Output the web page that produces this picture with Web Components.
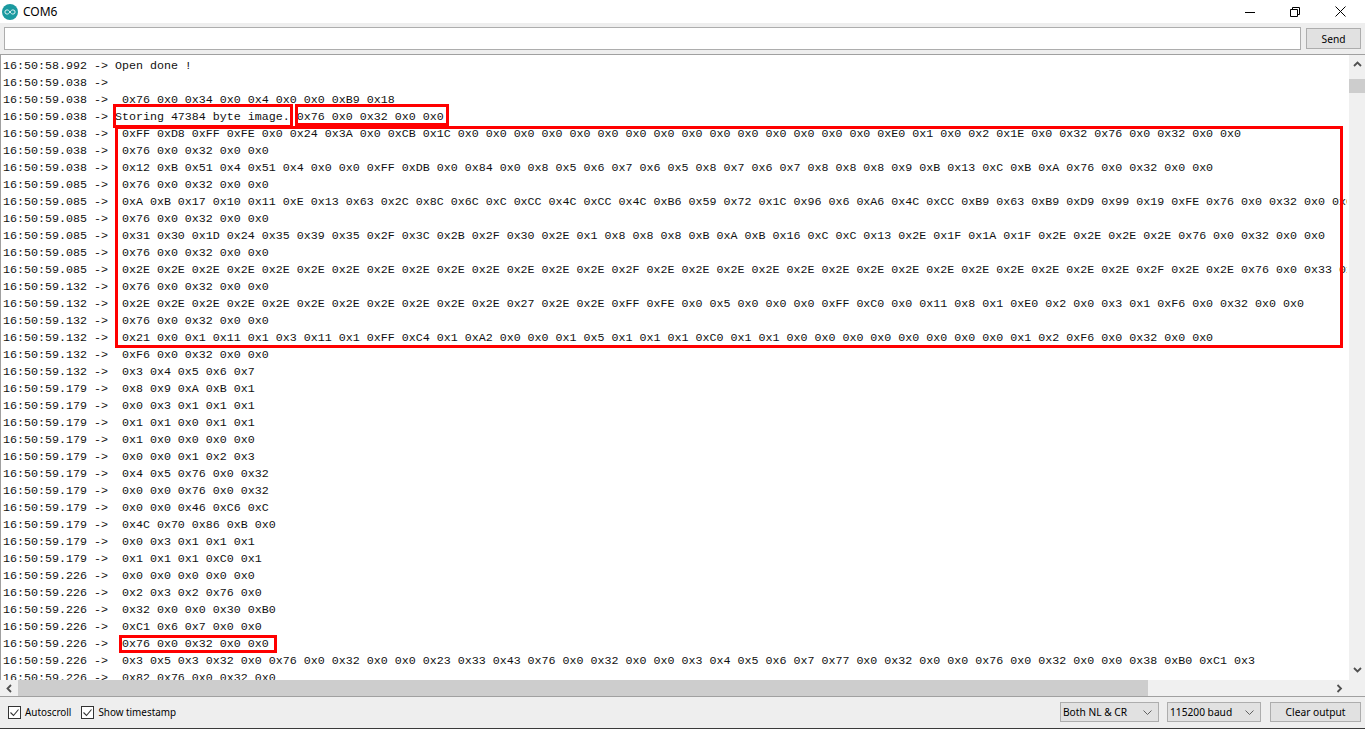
<!DOCTYPE html>
<html>
<head>
<meta charset="utf-8">
<title>COM6</title>
<style>
  html, body { margin: 0; padding: 0; height: 100%; overflow: hidden; background: #eee; }
</style>
</head>
<body>
<serial-monitor>
  <title-bar slot="title">COM6</title-bar>
  <send-row slot="send"></send-row>
  <serial-output slot="output"></serial-output>
  <footer-bar slot="footer"></footer-bar>
</serial-monitor>

<script>
const UI_FONT = '"Noto Sans", "Open Sans", sans-serif';

class SerialMonitor extends HTMLElement {
  constructor() {
    super();
    this.attachShadow({ mode: 'open' });
    this.shadowRoot.innerHTML = `
      <style>
        :host {
          display: flex;
          flex-direction: column;
          height: 729px;
          background: #eee;
          font-family: ${UI_FONT};
          box-sizing: border-box;
          border-bottom: 1px solid #3a3a3a;
        }
        .out { flex: 1; display: flex; min-height: 0; }
      </style>
      <slot name="title"></slot>
      <slot name="send"></slot>
      <div class="out"><slot name="output"></slot></div>
      <slot name="footer"></slot>
    `;
  }
}

class TitleBar extends HTMLElement {
  constructor() {
    super();
    this.attachShadow({ mode: 'open' });
    this.shadowRoot.innerHTML = `
      <style>
        :host {
          display: flex;
          align-items: center;
          height: 23px;
          flex: none;
          background: #fff;
          font-size: 12px;
          color: #000;
        }
        .logo { margin: 0 5px 0 2px; }
        .name { flex: 1; }
        .ctl { display: flex; padding-right: 19px; gap: 35px; align-items: center; }
        svg { display: block; }
      </style>
      <svg class="logo" width="16" height="16" viewBox="0 0 16 16">
        <circle cx="8" cy="8" r="8" fill="#1b9aa0"/>
        <path d="M8 8C7 6.4 6 5.9 5 5.9a2.1 2.1 0 0 0 0 4.2C6 10.1 7 9.6 8 8c1-1.6 2-2.1 3-2.1a2.1 2.1 0 0 1 0 4.2C10 10.1 9 9.6 8 8z" fill="none" stroke="#dff3f3" stroke-width="1"/>
      </svg>
      <span class="name"><slot></slot></span>
      <div class="ctl">
        <svg width="10" height="10" viewBox="0 0 10 10"><path d="M0 5.5h10" stroke="#000" stroke-width="1"/></svg>
        <svg width="10" height="10" viewBox="0 0 10 10" fill="none" stroke="#000"><path d="M.5 2.5h7v7h-7zM2.5 2.5v-2h7v7h-2"/></svg>
        <svg width="11" height="11" viewBox="0 0 11 11" fill="none" stroke="#000"><path d="M.5.5l10 10M10.5.5l-10 10"/></svg>
      </div>
    `;
  }
}

class WinButton extends HTMLElement {
  constructor() {
    super();
    this.attachShadow({ mode: 'open' });
    this.shadowRoot.innerHTML = `
      <style>
        :host {
          display: flex;
          align-items: center;
          justify-content: center;
          box-sizing: border-box;
          background: #e1e1e1;
          border: 1px solid #adadad;
          font-size: 10.2px;
          color: #000;
        }
      </style>
      <slot></slot>
    `;
  }
}

class SendRow extends HTMLElement {
  constructor() {
    super();
    this.attachShadow({ mode: 'open' });
    this.shadowRoot.innerHTML = `
      <style>
        :host {
          display: flex;
          flex: none;
          height: 32px;
          box-sizing: border-box;
          padding: 4px 4px 4px 4px;
          gap: 5px;
          border-bottom: 1px solid #a0a0a0;
        }
        .input { flex: 1; height: 23px; box-sizing: border-box; background: #fff; border: 1px solid #adadad; }
        win-button { width: 55px; height: 21px; margin-top: 1px; }
      </style>
      <div class="input"></div>
      <win-button>Send</win-button>
    `;
  }
}

const CLOSER = '0x76 0x0 0x32 0x0 0x0';
const OUTPUT_LINES = [
  ['58.992', 'Open done !'],
  ['59.038', ''],
  ['59.038', ' 0x76 0x0 0x34 0x0 0x4 0x0 0x0 0xB9 0x18'],
  ['59.038', 'Storing 47384 byte image. ' + CLOSER],
  ['59.038', ' 0xFF 0xD8 0xFF 0xFE 0x0 0x24 0x3A 0x0 0xCB 0x1C ' + '0x0 '.repeat(15) + '0xE0 0x1 0x0 0x2 0x1E 0x0 0x32 ' + CLOSER],
  ['59.038', ' ' + CLOSER],
  ['59.038', ' 0x12 0xB 0x51 0x4 0x51 0x4 0x0 0x0 0xFF 0xDB 0x0 0x84 0x0 0x8 0x5 0x6 0x7 0x6 0x5 0x8 0x7 0x6 0x7 0x8 0x8 0x8 0x9 0xB 0x13 0xC 0xB 0xA ' + CLOSER],
  ['59.085', ' ' + CLOSER],
  ['59.085', ' 0xA 0xB 0x17 0x10 0x11 0xE 0x13 0x63 0x2C 0x8C 0x6C 0xC 0xCC 0x4C 0xCC 0x4C 0xB6 0x59 0x72 0x1C 0x96 0x6 0xA6 0x4C 0xCC 0xB9 0x63 0xB9 0xD9 0x99 0x19 0xFE ' + CLOSER + ' 0x0'],
  ['59.085', ' ' + CLOSER],
  ['59.085', ' 0x31 0x30 0x1D 0x24 0x35 0x39 0x35 0x2F 0x3C 0x2B 0x2F 0x30 0x2E 0x1 0x8 0x8 0x8 0xB 0xA 0xB 0x16 0xC 0xC 0x13 0x2E 0x1F 0x1A 0x1F 0x2E 0x2E 0x2E 0x2E ' + CLOSER],
  ['59.085', ' ' + CLOSER],
  ['59.085', ' ' + '0x2E '.repeat(14) + '0x2F ' + '0x2E '.repeat(14) + '0x2F 0x2E 0x2E 0x76 0x0 0x33 0x0 0x0'],
  ['59.132', ' ' + CLOSER],
  ['59.132', ' ' + '0x2E '.repeat(11) + '0x27 0x2E 0x2E 0xFF 0xFE 0x0 0x5 0x0 0x0 0x0 0xFF 0xC0 0x0 0x11 0x8 0x1 0xE0 0x2 0x0 0x3 0x1 0xF6 0x0 0x32 0x0 0x0'],
  ['59.132', ' ' + CLOSER],
  ['59.132', ' 0x21 0x0 0x1 0x11 0x1 0x3 0x11 0x1 0xFF 0xC4 0x1 0xA2 0x0 0x0 0x1 0x5 0x1 0x1 0x1 0xC0 0x1 0x1 ' + '0x0 '.repeat(8) + '0x1 0x2 0xF6 0x0 0x32 0x0 0x0'],
  ['59.132', ' 0xF6 0x0 0x32 0x0 0x0'],
  ['59.132', ' 0x3 0x4 0x5 0x6 0x7'],
  ['59.179', ' 0x8 0x9 0xA 0xB 0x1'],
  ['59.179', ' 0x0 0x3 0x1 0x1 0x1'],
  ['59.179', ' 0x1 0x1 0x0 0x1 0x1'],
  ['59.179', ' 0x1 0x0 0x0 0x0 0x0'],
  ['59.179', ' 0x0 0x0 0x1 0x2 0x3'],
  ['59.179', ' 0x4 0x5 0x76 0x0 0x32'],
  ['59.179', ' 0x0 0x0 0x76 0x0 0x32'],
  ['59.179', ' 0x0 0x0 0x46 0xC6 0xC'],
  ['59.179', ' 0x4C 0x70 0x86 0xB 0x0'],
  ['59.179', ' 0x0 0x3 0x1 0x1 0x1'],
  ['59.179', ' 0x1 0x1 0x1 0xC0 0x1'],
  ['59.226', ' 0x0 0x0 0x0 0x0 0x0'],
  ['59.226', ' 0x2 0x3 0x2 0x76 0x0'],
  ['59.226', ' 0x32 0x0 0x0 0x30 0xB0'],
  ['59.226', ' 0xC1 0x6 0x7 0x0 0x0'],
  ['59.226', ' ' + CLOSER],
  ['59.226', ' 0x3 0x5 0x3 0x32 0x0 0x76 0x0 0x32 0x0 0x0 0x23 0x33 0x43 0x76 0x0 0x32 0x0 0x0 0x3 0x4 0x5 0x6 0x7 0x77 0x0 0x32 0x0 0x0 0x76 0x0 0x32 0x0 0x0 0x38 0xB0 0xC1 0x3'],
  ['59.226', ' 0x82 0x76 0x0 0x32 0x0'],
];

class SerialOutput extends HTMLElement {
  constructor() {
    super();
    this.attachShadow({ mode: 'open' });
    const lines = OUTPUT_LINES.map(([t, text]) => {
      const d = document.createElement('div');
      d.textContent = `16:50:${t} -> ${text}`;
      return d.outerHTML;
    }).join('');
    this.shadowRoot.innerHTML = `
      <style>
        :host { display: flex; flex: 1; min-width: 0; min-height: 0; }
        .view {
          flex: 1;
          position: relative;
          overflow: hidden;
          min-width: 0;
          background: #fff;
          border-left: 1px solid #a0a0a0;
          border-right: 2px solid #fff;
          padding: 3px 0 0 2px;
          font: 11.67px/17px "Liberation Mono", "Courier New", monospace;
          color: #111;
          white-space: pre;
        }
        .mark { position: absolute; box-sizing: border-box; border: 3px solid #f00; }
        .vbar {
          width: 16px;
          flex: none;
          background: #f0f0f0;
          display: flex;
          flex-direction: column;
          align-items: center;
          padding-top: 6px;
          box-sizing: border-box;
        }
        .thumb { align-self: stretch; height: 14px; margin-top: 12px; background: #cdcdcd; }
        .down { margin-top: auto; margin-bottom: 7px; }
        svg { display: block; flex: none; }
      </style>
      <div class="view">${lines}
        <div class="mark" style="left:112px;top:49px;width:180px;height:24px"></div>
        <div class="mark" style="left:294px;top:49px;width:154px;height:22px"></div>
        <div class="mark" style="left:114px;top:71px;width:1228px;height:222px"></div>
        <div class="mark" style="left:118px;top:580px;width:158px;height:18px"></div>
      </div>
      <div class="vbar">
        <svg width="9" height="6" viewBox="0 0 9 6"><path d="M1 5l3.5-3.5L8 5" fill="none" stroke="#505050" stroke-width="1.8"/></svg>
        <div class="thumb"></div>
        <svg class="down" width="9" height="6" viewBox="0 0 9 6"><path d="M1 1l3.5 3.5L8 1" fill="none" stroke="#505050" stroke-width="1.8"/></svg>
      </div>
    `;
  }
}

class WinCheck extends HTMLElement {
  constructor() {
    super();
    this.attachShadow({ mode: 'open' });
    this.shadowRoot.innerHTML = `
      <style>
        :host { display: inline-flex; align-items: center; gap: 4px; font-size: 9.9px; color: #000; }
        svg { display: block; }
      </style>
      <svg width="13" height="13" viewBox="0 0 13 13">
        <rect x=".5" y=".5" width="12" height="12" fill="#fff" stroke="#333"/>
        <path d="M2.5 6.5l3 3 5-6" fill="none" stroke="#333" stroke-width="1.1"/>
      </svg>
      <slot></slot>
    `;
  }
}

class WinSelect extends HTMLElement {
  constructor() {
    super();
    this.attachShadow({ mode: 'open' });
    this.shadowRoot.innerHTML = `
      <style>
        :host {
          display: flex;
          align-items: center;
          box-sizing: border-box;
          height: 20px;
          padding: 0 6px 0 2px;
          background: #e1e1e1;
          border: 1px solid #adadad;
          font-size: 10.2px;
          color: #000;
        }
        span { flex: 1; }
        svg { display: block; }
      </style>
      <span><slot></slot></span>
      <svg width="9" height="5" viewBox="0 0 9 5"><path d="M.5.5l4 4 4-4" fill="none" stroke="#606060"/></svg>
    `;
  }
}

class FooterBar extends HTMLElement {
  constructor() {
    super();
    this.attachShadow({ mode: 'open' });
    this.shadowRoot.innerHTML = `
      <style>
        :host { display: block; flex: none; }
        .hbar { display: flex; align-items: center; height: 16px; background: #f0f0f0; }
        .arrow { width: 18px; flex: none; display: flex; justify-content: center; }
        .thumb { width: 1130px; height: 16px; background: #cdcdcd; }
        .gap { flex: 1; }
        .right { width: 9px; margin-right: 21px; flex: none; }
        .row {
          display: flex;
          align-items: flex-start;
          height: 32px;
          box-sizing: border-box;
          padding: 5px 4px 0 8px;
          border-top: 1px solid #a0a0a0;
        }
        win-check { margin-top: 3px; margin-right: 10px; }
        .fill { flex: 1; }
        win-select, win-button { height: 20px; }
        .sel1 { width: 99px; margin-right: 8px; }
        .sel2 { width: 94px; margin-right: 9px; }
        win-button { width: 91px; }
        svg { display: block; }
      </style>
      <div class="hbar">
        <div class="arrow"><svg width="6" height="9" viewBox="0 0 6 9"><path d="M5 1L1.5 4.5 5 8" fill="none" stroke="#505050" stroke-width="1.8"/></svg></div>
        <div class="thumb"></div>
        <div class="gap"></div>
        <svg class="right" width="9" height="9" viewBox="0 0 6 9"><path d="M1 1l3.5 3.5L1 8" fill="none" stroke="#505050" stroke-width="1.8"/></svg>
      </div>
      <div class="row">
        <win-check>Autoscroll</win-check>
        <win-check>Show timestamp</win-check>
        <div class="fill"></div>
        <win-select class="sel1">Both NL &amp; CR</win-select>
        <win-select class="sel2">115200 baud</win-select>
        <win-button>Clear output</win-button>
      </div>
    `;
  }
}

customElements.define('win-button', WinButton);
customElements.define('win-check', WinCheck);
customElements.define('win-select', WinSelect);
customElements.define('title-bar', TitleBar);
customElements.define('send-row', SendRow);
customElements.define('serial-output', SerialOutput);
customElements.define('footer-bar', FooterBar);
customElements.define('serial-monitor', SerialMonitor);
</script>
</body>
</html>
